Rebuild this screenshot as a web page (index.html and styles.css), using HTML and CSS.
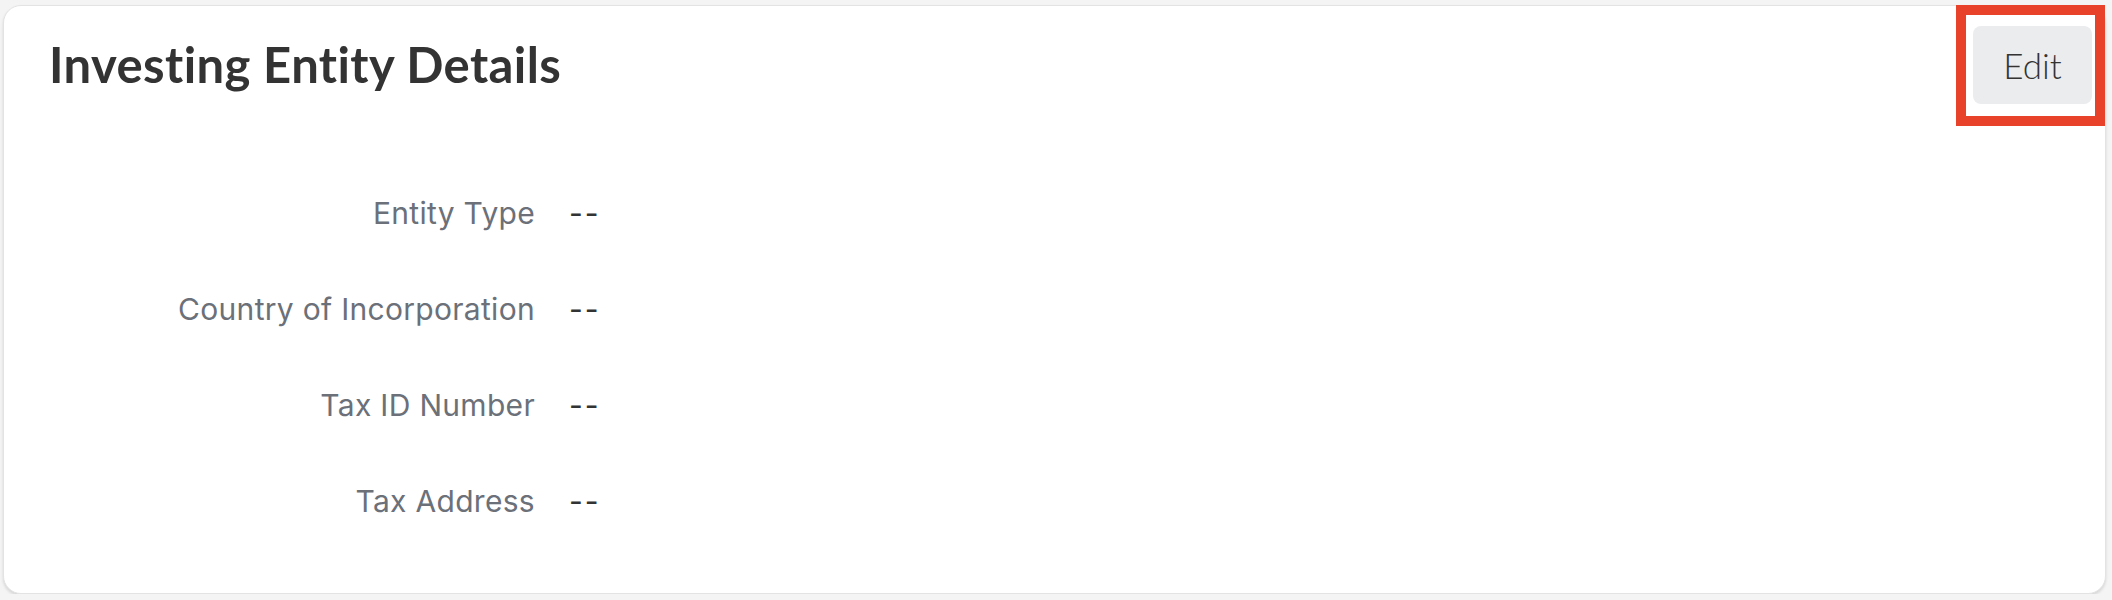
FILE: index.html
```html
<!DOCTYPE html>
<html>
<head>
  <link rel="stylesheet" href="styles.css">
</head>
<body>
  <div class="card">
    <div class="card-header">
      <h1 class="card-title">Investing Entity Details</h1>
      <div class="edit-wrap">
        <button class="edit-btn">Edit</button>
      </div>
    </div>
    <dl class="details">
      <dt>Entity Type</dt>
      <dd>--</dd>
      <dt>Country of Incorporation</dt>
      <dd>--</dd>
      <dt>Tax ID Number</dt>
      <dd>--</dd>
      <dt>Tax Address</dt>
      <dd>--</dd>
    </dl>
  </div>
</body>
</html>
```
FILE: styles.css
```css
body {
  margin: 0;
  background-color: #f4f4f4;
  font-family: "Inter", "Liberation Sans", sans-serif;
}
.card {
  margin: 5px 6px 0 3px;
  height: 589px;
  box-sizing: border-box;
  background-color: #fff;
  border: 1px solid #e3e3e3;
  border-radius: 18px;
  box-shadow: 0 2px 3px rgba(0, 0, 0, 0.12);
}
.card-header {
  display: flex;
  justify-content: space-between;
  align-items: flex-start;
  padding: 20px 13px 0 45px;
}
.card-title {
  margin: 0;
  padding-top: 10px;
  font-family: "Lato", sans-serif;
  font-weight: 700;
  font-size: 49px;
  line-height: 56px;
  letter-spacing: 0.4px;
  font-variant-ligatures: none;
  color: #333;
}
.edit-wrap {
  position: relative;
}
/* red highlight box around the button */
.edit-wrap::after {
  content: "";
  position: absolute;
  top: -21px;
  left: -17px;
  right: -13px;
  bottom: -22px;
  border: 10px solid #e8432a;
}
.edit-btn {
  display: block;
  width: 119px;
  height: 78px;
  border: none;
  border-radius: 8px;
  background-color: #ebecee;
  font-family: "Lato", sans-serif;
  font-weight: 300;
  font-size: 35px;
  color: #333;
}
.details {
  display: grid;
  grid-template-columns: 491px 1fr;
  column-gap: 34px;
  row-gap: 58px;
  margin: 90px 0 0 40px;
  font-size: 30px;
  line-height: 38px;
  letter-spacing: 0.3px;
}
.details dt {
  text-align: right;
  color: #6b7079;
}
.details dd {
  margin: 0;
  letter-spacing: 2px;
  color: #333;
}
```
